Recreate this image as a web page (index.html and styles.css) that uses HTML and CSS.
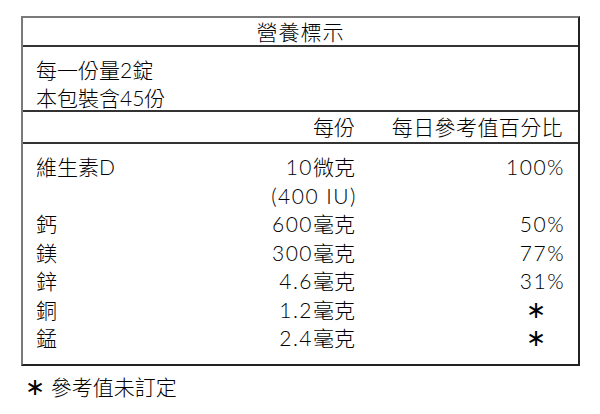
FILE: index.html
```html
<!DOCTYPE html>
<html lang="zh-Hant">
<head>
<meta charset="utf-8">
<title>營養標示</title>
<link rel="stylesheet" href="styles.css">
</head>
<body>
<div class="label">
  <div class="title">營養標示</div>
  <div class="info">
    <div>每一份量2錠</div>
    <div>本包裝含45份</div>
  </div>
  <div class="grid head">
    <div></div>
    <div class="amt">每份</div>
    <div class="pct">每日參考值百分比</div>
  </div>
  <div class="grid body">
    <div>維生素D</div><div class="amt"><span class="num">10</span>微克</div><div class="pct"><span class="num end">100%</span></div>
    <div></div><div class="amt"><span class="num end">(400 IU)</span></div><div class="pct"></div>
    <div>鈣</div><div class="amt"><span class="num">600</span>毫克</div><div class="pct"><span class="num end">50%</span></div>
    <div>鎂</div><div class="amt"><span class="num">300</span>毫克</div><div class="pct"><span class="num end">77%</span></div>
    <div>鋅</div><div class="amt"><span class="num">4.6</span>毫克</div><div class="pct"><span class="num end">31%</span></div>
    <div>銅</div><div class="amt"><span class="num">1.2</span>毫克</div><div class="pct"><span class="star">∗</span></div>
    <div>錳</div><div class="amt"><span class="num">2.4</span>毫克</div><div class="pct"><span class="star">∗</span></div>
  </div>
</div>
<div class="note"><span class="nstar">∗</span> 參考值未訂定</div>
</body>
</html>
```

FILE: styles.css
```css
html, body {
  margin: 0;
  padding: 0;
  background: #fff;
}
body {
  font-family: "Lato", "Noto Sans CJK TC", sans-serif;
  font-size: 21px;
  font-weight: 300;
  color: #000;
}
.label {
  margin: 16px 0 0 21px;
  width: 559px;
  box-sizing: border-box;
  border-top: 2px solid #7a7a7a;
  border-left: 2px solid #7a7a7a;
  border-right: 2px solid #222;
  border-bottom: 2px solid #222;
}
.title {
  height: 27px;
  line-height: 27px;
  text-align: center;
  letter-spacing: 1px;
  border-bottom: 2px solid #333;
}
.info {
  height: 65px;
  box-sizing: border-box;
  padding: 9px 13px 0 13px;
  line-height: 28px;
  border-bottom: 2px solid #333;
}
.grid {
  display: grid;
  grid-template-columns: 209px 110px 208px;
  padding: 0 15px 0 13px;
}
.head {
  height: 30px;
  line-height: 30px;
  border-bottom: 2px solid #333;
}
.head .pct {
  letter-spacing: 0.4px;
}
.body {
  padding-top: 9px;
  padding-bottom: 11px;
  line-height: 28.5px;
}
.amt, .pct {
  text-align: right;
  white-space: nowrap;
}
.num {
  letter-spacing: 1.5px;
}
.num.end {
  margin-right: -2px;
}
.star {
  font-family: "DejaVu Sans", sans-serif;
  font-size: 24px;
  font-weight: 400;
  padding-right: 17px;
}
.note {
  margin: 7px 0 0 25px;
  line-height: 28px;
}
.nstar {
  font-family: "DejaVu Sans", sans-serif;
  font-size: 24px;
  font-weight: 400;
}
```
